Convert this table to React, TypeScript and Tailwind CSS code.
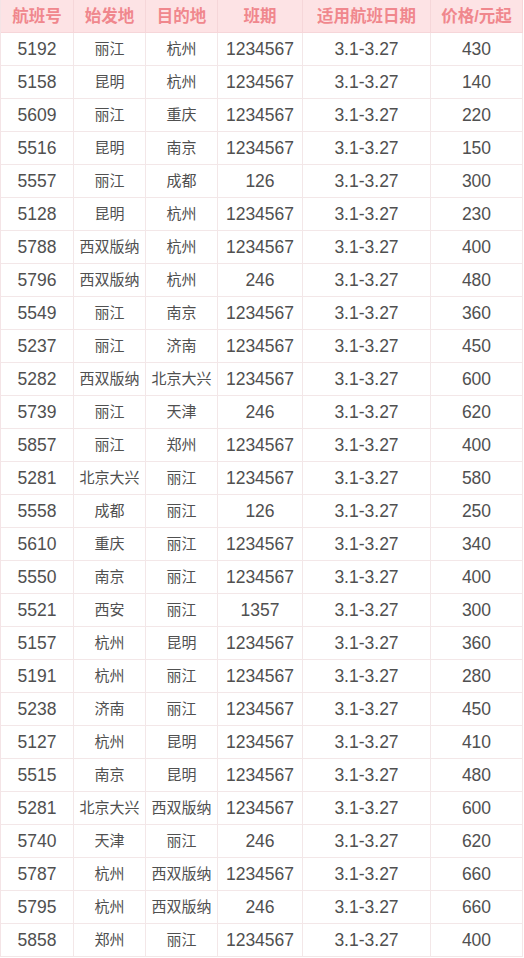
import React from "react";

const rows: string[][] = [
  ["5192", "丽江", "杭州", "1234567", "430"],
  ["5158", "昆明", "杭州", "1234567", "140"],
  ["5609", "丽江", "重庆", "1234567", "220"],
  ["5516", "昆明", "南京", "1234567", "150"],
  ["5557", "丽江", "成都", "126", "300"],
  ["5128", "昆明", "杭州", "1234567", "230"],
  ["5788", "西双版纳", "杭州", "1234567", "400"],
  ["5796", "西双版纳", "杭州", "246", "480"],
  ["5549", "丽江", "南京", "1234567", "360"],
  ["5237", "丽江", "济南", "1234567", "450"],
  ["5282", "西双版纳", "北京大兴", "1234567", "600"],
  ["5739", "丽江", "天津", "246", "620"],
  ["5857", "丽江", "郑州", "1234567", "400"],
  ["5281", "北京大兴", "丽江", "1234567", "580"],
  ["5558", "成都", "丽江", "126", "250"],
  ["5610", "重庆", "丽江", "1234567", "340"],
  ["5550", "南京", "丽江", "1234567", "400"],
  ["5521", "西安", "丽江", "1357", "300"],
  ["5157", "杭州", "昆明", "1234567", "360"],
  ["5191", "杭州", "丽江", "1234567", "280"],
  ["5238", "济南", "丽江", "1234567", "450"],
  ["5127", "杭州", "昆明", "1234567", "410"],
  ["5515", "南京", "昆明", "1234567", "480"],
  ["5281", "北京大兴", "西双版纳", "1234567", "600"],
  ["5740", "天津", "丽江", "246", "620"],
  ["5787", "杭州", "西双版纳", "1234567", "660"],
  ["5795", "杭州", "西双版纳", "246", "660"],
  ["5858", "郑州", "丽江", "1234567", "400"],
];

const headers = ["航班号", "始发地", "目的地", "班期", "适用航班日期", "价格/元起"];

const font = { fontFamily: '"Liberation Sans", "Noto Sans CJK SC", sans-serif' };

export default function App() {
  return (
    <div className="w-[524px] h-[958px] bg-white overflow-hidden" style={font}>
      <div className="grid grid-cols-[73px_72px_72px_85px_128px_92px] w-[522px] border-l border-[#f4e4e6]">
        {headers.map((h, i) => (
          <div
            key={i}
            className="h-[33px] flex items-center justify-center bg-[#fde3e5] text-[#f0878d] text-[16.5px] font-bold border-r border-b border-[#f6d6d9]"
          >
            {h}
          </div>
        ))}
        {rows.map((r, ri) => {
          const cells = [r[0], r[1], r[2], r[3], "3.1-3.27", r[4]];
          return cells.map((c, ci) => {
            const isCjk = ci === 1 || ci === 2;
            return (
              <div
                key={ri + "-" + ci}
                className={
                  "h-[33px] flex items-center justify-center text-[#505050] border-r border-b border-[#f3e7e8] " +
                  (isCjk ? "text-[15px]" : "text-[17.5px]")
                }
              >
                {c}
              </div>
            );
          });
        })}
      </div>
    </div>
  );
}
